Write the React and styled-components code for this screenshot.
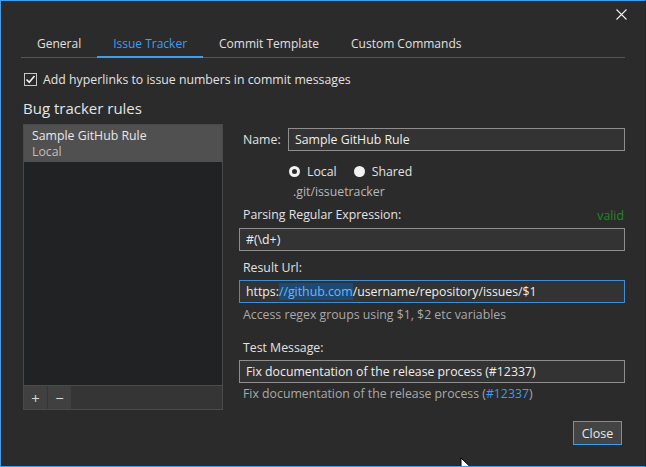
import { createGlobalStyle } from "styled-components";
import styled from "styled-components";

const GlobalStyle = createGlobalStyle`
  html, body {
    margin: 0;
    padding: 0;
    background: #2b2b2b;
  }
  body {
    font-family: "Open Sans", "Noto Sans", sans-serif;
  }
`;

const Dialog = styled.div`
  position: relative;
  box-sizing: border-box;
  width: 646px;
  height: 467px;
  overflow: hidden;
  background: #2b2b2b;
  border: 1px solid #3c9ef0;
  border-right-color: #262626;
  color: #e2e2e2;
  font-size: 12.3px;
  padding: 0 20px 0 20px;
  display: flex;
  flex-direction: column;
`;

const TitleBar = styled.div`
  height: 27px;
  display: flex;
  justify-content: flex-end;
  align-items: center;
`;

const CloseX = styled.svg`
  width: 11px;
  height: 11px;
  margin-right: -2px;
`;

const TabBar = styled.div`
  display: flex;
  border-bottom: 1px solid #555555;
  height: 29px;
`;

const Tab = styled.div`
  padding: 0 16px;
  display: flex;
  align-items: center;
  font-size: 12px;
  color: ${(p) => (p.$active ? "#3d9ef0" : "#e0e0e0")};
  box-shadow: ${(p) => (p.$active ? "inset 0 -2px 0 #3d9ef0" : "none")};
  margin-bottom: -1px;
`;

const Body = styled.div`
  padding-left: 2px;
  display: flex;
  flex-direction: column;
`;

const CheckRow = styled.label`
  display: flex;
  align-items: center;
  gap: 6px;
  margin-top: 13px;
  margin-left: 1px;
  height: 16px;
`;

const CheckBox = styled.span`
  box-sizing: border-box;
  width: 13px;
  height: 13px;
  border: 1px solid #c8c8c8;
  display: flex;
  align-items: center;
  justify-content: center;
`;

const Heading = styled.div`
  font-size: 15px;
  color: #e4e4e4;
  margin-top: 10px;
  line-height: 22px;
`;

const Main = styled.div`
  display: flex;
  gap: 16px;
  margin-top: 5px;
`;

const RuleList = styled.div`
  box-sizing: border-box;
  width: 200px;
  height: 286px;
  border: 1px solid #4a4a4a;
  background: #212224;
  display: flex;
  flex-direction: column;
`;

const RuleItems = styled.div`
  flex: 1;
`;

const RuleItem = styled.div`
  background: ${(p) => (p.$selected ? "#505050" : "transparent")};
  padding: 2px 8px 2px 8px;
  height: 37px;
  box-sizing: border-box;
  display: flex;
  flex-direction: column;
  justify-content: center;
`;

const RuleName = styled.div`
  color: #e8e8e8;
  line-height: 17px;
`;

const RuleScope = styled.div`
  color: #c4beb4;
  line-height: 16px;
`;

const ListToolbar = styled.div`
  height: 23px;
  border-top: 1px solid #4a4a4a;
  background: #353535;
  display: flex;
  gap: 1px;
`;

const ToolButton = styled.div`
  width: 23px;
  height: 23px;
  background: #404040;
  color: #d8d8d8;
  display: flex;
  align-items: center;
  justify-content: center;
  font-size: 15px;
`;

const Form = styled.div`
  flex: 1;
  width: 385px;
  padding-top: 4px;
  display: flex;
  flex-direction: column;
`;

const Row = styled.div`
  display: flex;
  align-items: center;
  justify-content: space-between;
  margin-top: ${(p) => p.$mt || 0}px;
`;

const Label = styled.div`
  padding-left: 4px;
  line-height: 18px;
  margin-top: ${(p) => p.$mt || 0}px;
  color: #e2e2e2;
`;

const Input = styled.div`
  box-sizing: border-box;
  height: 23px;
  flex: 1;
  border: 1px solid ${(p) => (p.$focused ? "#3b8ed8" : "#8e8e8e")};
  background: #333333;
  padding: 0 6px;
  display: flex;
  align-items: center;
  white-space: nowrap;
  color: #eeeeee;
`;

const NameLabel = styled.div`
  padding-left: 4px;
  width: 49px;
  box-sizing: border-box;
`;

const Selected = styled.span`
  background: #1c4a74;
  color: #72b6f2;
`;

const RadioRow = styled.div`
  display: flex;
  align-items: center;
  height: 18px;
  margin-top: 11px;
  padding-left: 50px;
`;

const Radio = styled.span`
  box-sizing: border-box;
  width: 11px;
  height: 11px;
  border-radius: 50%;
  background: ${(p) => (p.$checked ? "#2b2b2b" : "#f2f2f2")};
  border: ${(p) => (p.$checked ? "3px solid #f2f2f2" : "none")};
  margin-right: 7px;
`;

const RadioLabel = styled.span`
  margin-right: 17px;
`;

const PathNote = styled.div`
  color: #b8b8b8;
  line-height: 18px;
  margin-top: 3px;
  padding-left: 54px;
`;

const Valid = styled.span`
  color: #1f8a1f;
  padding-right: 1px;
`;

const Hint = styled.div`
  color: #a9a9a9;
  line-height: 18px;
  padding-left: 4px;
  margin-top: ${(p) => p.$mt || 0}px;
`;

const Link = styled.span`
  color: #3a9cf0;
`;

const Footer = styled.div`
  display: flex;
  justify-content: flex-end;
  margin-top: 11px;
  padding-right: 3px;
`;

const Button = styled.div`
  box-sizing: border-box;
  width: 49px;
  height: 24px;
  border: 1px solid #3c9ef0;
  background: #444444;
  color: #e8e8e8;
  display: flex;
  align-items: center;
  justify-content: center;
  font-size: 12.5px;
`;

const Cursor = styled.svg`
  position: absolute;
  left: 459px;
  top: 456px;
  width: 12px;
  height: 18px;
`;

export default function App() {
  return (
    <>
      <GlobalStyle />
      <Dialog>
        <TitleBar>
          <CloseX viewBox="0 0 11 11">
            <path d="M0.5 0.5 L10.5 10.5 M10.5 0.5 L0.5 10.5" stroke="#f0f0f0" strokeWidth="1.1" />
          </CloseX>
        </TitleBar>
        <TabBar>
          <Tab>General</Tab>
          <Tab $active>Issue Tracker</Tab>
          <Tab>Commit Template</Tab>
          <Tab>Custom Commands</Tab>
        </TabBar>
        <Body>
          <CheckRow>
            <CheckBox>
              <svg width="11" height="11" viewBox="0 0 11 11">
                <path d="M1.5 5.5 L4.2 8.3 L9.5 2" fill="none" stroke="#f2f2f2" strokeWidth="1.6" />
              </svg>
            </CheckBox>
            Add hyperlinks to issue numbers in commit messages
          </CheckRow>
          <Heading>Bug tracker rules</Heading>
          <Main>
            <RuleList>
              <RuleItems>
                <RuleItem $selected>
                  <RuleName>Sample GitHub Rule</RuleName>
                  <RuleScope>Local</RuleScope>
                </RuleItem>
              </RuleItems>
              <ListToolbar>
                <ToolButton>+</ToolButton>
                <ToolButton>−</ToolButton>
              </ListToolbar>
            </RuleList>
            <Form>
              <Row>
                <NameLabel>Name:</NameLabel>
                <Input>Sample GitHub Rule</Input>
              </Row>
              <RadioRow>
                <Radio $checked />
                <RadioLabel>Local</RadioLabel>
                <Radio />
                <RadioLabel>Shared</RadioLabel>
              </RadioRow>
              <PathNote>.git/issuetracker</PathNote>
              <Row $mt={5}>
                <Label>Parsing Regular Expression:</Label>
                <Valid>valid</Valid>
              </Row>
              <Row $mt={4}>
                <Input>#(\d+)</Input>
              </Row>
              <Label $mt={8}>Result Url:</Label>
              <Row $mt={3}>
                <Input $focused>
                  https:<Selected>//github.com</Selected>/username/repository/issues/$1
                </Input>
              </Row>
              <Hint $mt={3}>Access regex groups using $1, $2 etc variables</Hint>
              <Label $mt={15}>Test Message:</Label>
              <Row $mt={3}>
                <Input>Fix documentation of the release process (#12337)</Input>
              </Row>
              <Hint $mt={2}>
                Fix documentation of the release process (<Link>#12337</Link>)
              </Hint>
            </Form>
          </Main>
          <Footer>
            <Button>Close</Button>
          </Footer>
        </Body>
        <Cursor viewBox="0 0 12 18">
          <path d="M1 1 L1 15 L4.5 11.5 L7 17 L9 16 L6.5 10.5 L11 10.5 Z" fill="#ffffff" stroke="#000000" strokeWidth="1" />
        </Cursor>
      </Dialog>
    </>
  );
}
